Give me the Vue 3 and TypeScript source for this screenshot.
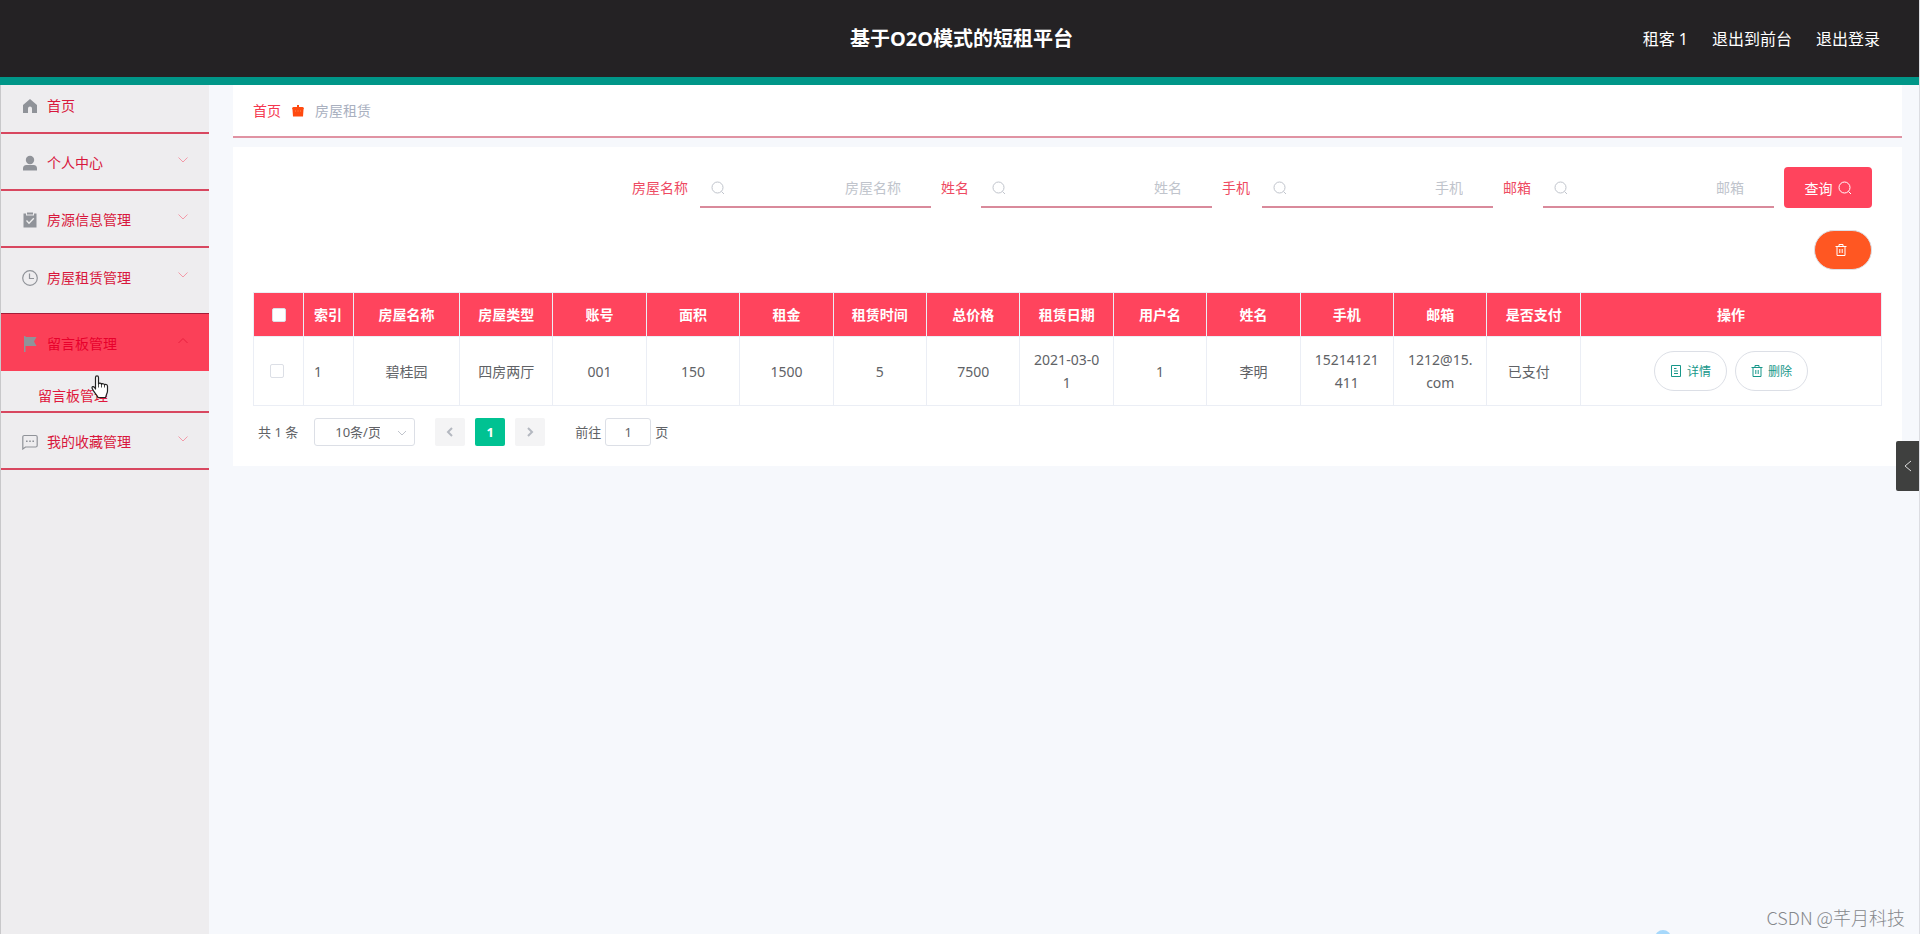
<script setup lang="ts">
import { ref } from 'vue'

interface MenuItem {
  label: string
  icon: string
  arrow: boolean
  active?: boolean
  children?: string[]
}

const menu: MenuItem[] = [
  { label: '首页', icon: 'home', arrow: false },
  { label: '个人中心', icon: 'user', arrow: true },
  { label: '房源信息管理', icon: 'claim', arrow: true },
  { label: '房屋租赁管理', icon: 'time', arrow: true },
  { label: '留言板管理', icon: 'flag', arrow: true, active: true, children: ['留言板管理'] },
  { label: '我的收藏管理', icon: 'chat', arrow: true },
]

const fields = ref([
  { id: 'house', label: '房屋名称', value: '' },
  { id: 'name', label: '姓名', value: '' },
  { id: 'phone', label: '手机', value: '' },
  { id: 'mail', label: '邮箱', value: '' },
])

const columns: string[] = [
  '房屋类型', '账号', '面积', '租金', '租赁时间', '总价格',
  '租赁日期', '用户名', '姓名', '手机', '邮箱',
]

const rows = ref([
  {
    index: 1,
    house: '碧桂园',
    cells: ['四房两厅', '001', '150', '1500', '5', '7500', '2021-03-01', '1', '李明', '15214121411', '1212@15.com'],
    paid: '已支付',
    checked: false,
  },
])

const allChecked = ref(false)
const pageSize = ref('10条/页')
const jump = ref('1')
</script>

<template>
  <div class="app">
    <header class="top">
      <h1>基于O2O模式的短租平台</h1>
      <nav class="top-links">
        <span>租客 1</span>
        <a href="#">退出到前台</a>
        <a href="#">退出登录</a>
      </nav>
    </header>

    <div class="body">
      <aside class="side">
        <ul class="menu">
          <li v-for="item in menu" :key="item.label" :class="['item', item.icon, { active: item.active }]">
            <a href="#" class="row">
              <svg class="mi" viewBox="0 0 16 16" aria-hidden="true">
                <path v-if="item.icon === 'home'" fill="#909399" d="M8 1 1 7v8h5v-4.500a2 2 0 0 1 4 0V15h5V7z" />
                <g v-else-if="item.icon === 'user'" fill="#909399">
                  <circle cx="8" cy="5" r="4.200" />
                  <path d="M1 15.500v-2A3.500 3.500 0 0 1 4.500 10h7a3.500 3.500 0 0 1 3.500 3.500v2z" />
                </g>
                <g v-else-if="item.icon === 'claim'">
                  <path fill="#909399" d="M2 1.500h2v2h8v-2h2.500v14h-13v-14zM5 .5h6v2H5z" />
                  <path fill="none" stroke="#eee" stroke-width="1.300" d="m4.500 8.500 2.500 2.700 4.800-5" />
                </g>
                <g v-else-if="item.icon === 'time'" fill="none" stroke="#909399" stroke-width="1.200">
                  <circle cx="8" cy="8" r="7.300" />
                  <path d="M7.500 3.500v5H12" />
                </g>
                <path v-else-if="item.icon === 'flag'" fill="#909399" d="M2 0h1.500v1H14.500l-2.500 4.500 2.500 4.500h-11v6H2z" />
                <g v-else fill="none" stroke="#909399" stroke-width="1.200">
                  <path d="M.8 15V3a1.500 1.500 0 0 1 1.500-1.500h11.400A1.500 1.500 0 0 1 15.200 3v8.500a1.500 1.500 0 0 1-1.500 1.500H3.500z" />
                  <path stroke-width="1.600" d="M4 7.200h1.600M7.200 7.200h1.600M10.400 7.200H12" />
                </g>
              </svg>
              <span>{{ item.label }}</span>
              <svg v-if="item.arrow" class="arrow" viewBox="0 0 12 12" aria-hidden="true">
                <path :d="item.active ? 'm1.500 8 4.500-4.500L10.500 8' : 'm1.500 3.500 4.500 4.500 4.500-4.500'" />
              </svg>
            </a>
            <ul v-if="item.children" class="sub">
              <li v-for="c in item.children" :key="c"><a href="#">{{ c }}</a></li>
            </ul>
          </li>
        </ul>
        <svg class="cursor" viewBox="0 0 18 24" aria-hidden="true">
          <path
            fill="#fff" stroke="#222" stroke-width="1.200" stroke-linejoin="round"
            d="M4.500 2.500c0-2.200 3-2.200 3 0V9c.3-1.300 2.800-1.300 3 .4.500-1.100 2.800-.9 3 .6.700-1 3-.6 3 1.200V16c0 2.500-1.500 3.500-1.800 6.500H7C6 19.500 2.500 17 1.200 13.500c-.8-2 1.300-2.600 2.300-1l1 1.500z"
          />
          <path fill="none" stroke="#222" stroke-width=".8" d="M7.500 9v3.500M10.500 9.500v3M13.500 10v2.500" />
        </svg>
      </aside>

      <main class="main">
        <nav class="crumbs">
          <a href="#">首页</a>
          <svg viewBox="0 0 12 12" aria-hidden="true">
            <path fill="#ff4a10" d="M5 0h2v2h3.500a1.500 1.500 0 0 1 1 2.500L11 11.500H1L.5 4.500A1.500 1.500 0 0 1 1.500 2H5z" />
            <path fill="none" stroke="#ff9a60" stroke-width=".8" d="M3.500 5.500v1M6 5.500v1M8.500 5.500v1" />
          </svg>
          <span>房屋租赁</span>
        </nav>

        <section class="card">
          <form class="search" @submit.prevent>
            <div v-for="f in fields" :key="f.id" class="field">
              <label :for="f.id">{{ f.label }}</label>
              <div class="box">
                <svg class="lens" viewBox="0 0 14 14" aria-hidden="true">
                  <circle cx="6.500" cy="6.500" r="5.500" /><path d="m10.500 10.500 2.500 2.500" />
                </svg>
                <input :id="f.id" v-model="f.value" type="text" :placeholder="f.label" />
              </div>
            </div>
            <button type="submit" class="query">
              查询
              <svg class="lens" viewBox="0 0 14 14" aria-hidden="true">
                <circle cx="6.500" cy="6.500" r="5.500" /><path d="m10.500 10.500 2.500 2.500" />
              </svg>
            </button>
          </form>

          <div class="tools">
            <button type="button" class="bulk" aria-label="删除">
              <svg class="bin" viewBox="0 0 12 12" aria-hidden="true">
                <path d="M.5 2.500h11M4 2.500v-2h4v2M2 2.500v9h8v-9M4.800 5v4M7.200 5v4" />
              </svg>
            </button>
          </div>

          <table>
            <colgroup>
              <col class="c-small" /><col class="c-small" /><col class="c-house" />
              <col v-for="n in 12" :key="n" />
              <col class="c-ops" />
            </colgroup>
            <thead>
              <tr>
                <th><input v-model="allChecked" type="checkbox" aria-label="全选" /></th>
                <th class="idx">索引</th>
                <th>房屋名称</th>
                <th v-for="c in columns" :key="c">{{ c }}</th>
                <th>是否支付</th>
                <th>操作</th>
              </tr>
            </thead>
            <tbody>
              <tr v-for="r in rows" :key="r.index">
                <td class="pick"><input v-model="r.checked" type="checkbox" aria-label="选择" /></td>
                <td class="idx">{{ r.index }}</td>
                <td>{{ r.house }}</td>
                <td v-for="(c, i) in r.cells" :key="i">{{ c }}</td>
                <td class="paid">{{ r.paid }}</td>
                <td>
                  <div class="ops">
                    <button type="button">
                      <svg class="bin" viewBox="0 0 12 12" aria-hidden="true">
                        <path d="M1.500 .5h9v11h-9zM4 3.500h2.500M4 6h4M4 8.500h4" />
                      </svg>
                      详情
                    </button>
                    <button type="button">
                      <svg class="bin" viewBox="0 0 12 12" aria-hidden="true">
                        <path d="M.5 2.500h11M4 2.500v-2h4v2M2 2.500v9h8v-9M4.800 5v4M7.200 5v4" />
                      </svg>
                      删除
                    </button>
                  </div>
                </td>
              </tr>
            </tbody>
          </table>

          <div class="pager">
            <span>共 1 条</span>
            <div class="size">
              <select v-model="pageSize" aria-label="每页条数"><option>10条/页</option></select>
              <svg viewBox="0 0 12 12" aria-hidden="true"><path d="m2 4 4 4 4-4" /></svg>
            </div>
            <div class="pages">
              <button type="button" aria-label="上一页"><svg viewBox="0 0 12 12"><path d="M8 2 4 6l4 4" /></svg></button>
              <button type="button" class="on">1</button>
              <button type="button" aria-label="下一页"><svg viewBox="0 0 12 12"><path d="m4 2 4 4-4 4" /></svg></button>
            </div>
            <label class="jump">前往<input v-model="jump" type="text" />页</label>
          </div>
        </section>
      </main>
    </div>

    <button type="button" class="handle" aria-label="展开">
      <svg viewBox="0 0 12 12" aria-hidden="true"><path d="M9 1 3 6l6 5" /></svg>
    </button>
    <span class="dot"></span>
    <span class="mark">CSDN @芊月科技</span>
  </div>
</template>

<style>
body {
  margin: 0;
}
</style>

<style scoped>
* {
  box-sizing: border-box;
}
.app {
  position: relative;
  display: flex;
  flex-direction: column;
  min-height: 100vh;
  overflow: hidden;
  background: #f6f8fc;
  border-right: 1px solid #dcdde2;
  font-family: "Noto Sans", "Noto Sans CJK SC", sans-serif;
  font-size: 14px;
  color: #606266;
}
a {
  color: inherit;
  text-decoration: none;
}
button,
input,
select {
  font: inherit;
  margin: 0;
}
.top {
  position: relative;
  display: flex;
  align-items: center;
  justify-content: center;
  height: 85px;
  background: #242224;
  border-bottom: 8px solid #009688;
  color: #fff;
}
.top h1 {
  margin: 0;
  padding-left: 4px;
  font-size: 20px;
  line-height: 30px;
}
.top-links {
  position: absolute;
  right: 39px;
  display: flex;
  gap: 24px;
  font-size: 16px;
  line-height: 24px;
}
.body {
  display: flex;
  flex: 1;
}
.side {
  position: relative;
  flex: 0 0 209px;
  background: #eeedef;
  border-left: 1px solid #c8c8ca;
}
.menu,
.sub {
  margin: 0;
  padding: 0;
  list-style: none;
}
.row {
  display: flex;
  align-items: center;
  height: 57px;
  padding: 0 20px 0 21px;
  border-bottom: 2px solid #d8475f;
  color: #d8173c;
}
.home .row {
  height: 49px;
  padding-bottom: 8px;
}
.time .row {
  height: 65px;
  padding-bottom: 8px;
  border-bottom: 0;
}
.mi {
  width: 16px;
  height: 16px;
  margin-top: 2px;
  margin-right: 9px;
}
.arrow {
  width: 12px;
  height: 12px;
  margin-left: auto;
  margin-bottom: 4px;
  fill: none;
  stroke: #f39aa8;
}
.active .row {
  height: 58px;
  background: #fb4058;
  border-top: 1px solid #a51c38;
  border-bottom: 0;
  color: #e8002c;
}
.active .arrow {
  stroke: #e8203f;
}
.sub a {
  display: block;
  height: 42px;
  padding: 6px 0 0 37px;
  border-bottom: 2px solid #d8475f;
  line-height: 38px;
  color: #e0183c;
}
.cursor {
  position: absolute;
  left: 90px;
  top: 290px;
  width: 18px;
  height: 24px;
}
.main {
  flex: 1;
  min-width: 0;
  padding: 0 17px 0 24px;
}
.crumbs {
  display: flex;
  align-items: center;
  gap: 11px;
  height: 53px;
  padding: 0 20px;
  background: #fff;
  border-bottom: 2px solid #e093a3;
  line-height: 20px;
  color: #a9b0bf;
}
.crumbs a {
  color: #f5364f;
}
.crumbs svg {
  width: 12px;
  height: 12px;
}
.card {
  margin-top: 9px;
  padding: 20px;
  background: #fff;
}
.search {
  display: flex;
  justify-content: flex-end;
  gap: 10px;
  padding-right: 10px;
}
.field {
  display: flex;
  align-items: center;
  gap: 12px;
}
.field label {
  padding-bottom: 1px;
  color: #ee4a62;
}
.box {
  position: relative;
}
.box input {
  display: block;
  width: 231px;
  height: 41px;
  padding: 1px 30px 0;
  border: 0;
  border-bottom: 2px solid #d98a9b;
  background: transparent;
  text-align: right;
  color: #606266;
}
.box input::placeholder {
  color: #c0c4cc;
}
.lens {
  width: 14px;
  height: 14px;
  fill: none;
  stroke: currentColor;
}
.box .lens {
  position: absolute;
  left: 11px;
  top: 14px;
  color: #c0c4cc;
}
.query {
  display: flex;
  align-items: center;
  justify-content: center;
  gap: 5px;
  width: 88px;
  height: 41px;
  padding: 0;
  border: 0;
  border-radius: 4px;
  background: #ff445d;
  color: #fff;
}
.tools {
  display: flex;
  justify-content: flex-end;
  padding: 22px 10px;
}
.bulk {
  display: flex;
  align-items: center;
  width: 58px;
  height: 40px;
  padding: 0 20px;
  border: 1px solid #dcdfe6;
  border-radius: 20px;
  background: #ff5722;
  color: #fff;
}
.bin {
  width: 12px;
  height: 12px;
  fill: none;
  stroke: currentColor;
}
table {
  width: 100%;
  table-layout: fixed;
  border-collapse: collapse;
}
.c-small {
  width: 50px;
}
.c-house {
  width: 106px;
}
.c-ops {
  width: 301px;
}
th,
td {
  padding: 11px 12px;
  border: 1px solid #ebeef5;
  line-height: 23px;
  text-align: center;
  word-break: break-all;
}
th {
  padding: 10px 0;
  background: #ff445d;
  color: #fff;
}
.idx,
th.idx {
  padding-left: 10px;
  text-align: left;
}
td.pick {
  padding: 0 14px 0 10px;
}
td.paid {
  padding-right: 22px;
}
input[type='checkbox'] {
  display: block;
  appearance: none;
  width: 14px;
  height: 14px;
  margin: 0 auto;
  border: 1px solid #dcdfe6;
  border-radius: 2px;
  background: #fff;
}
.ops {
  display: flex;
  justify-content: center;
  gap: 8px;
}
.ops button {
  display: flex;
  align-items: center;
  justify-content: center;
  gap: 5px;
  width: 73px;
  height: 40px;
  padding: 0;
  border: 1px solid #dcdfe6;
  border-radius: 20px;
  background: #fff;
  color: #17978a;
  font-size: 12px;
}
.pager {
  display: flex;
  align-items: center;
  padding: 12px 5px 0;
  font-size: 13px;
  line-height: 28px;
}
.size {
  position: relative;
  margin-left: 16px;
}
.size select {
  display: block;
  appearance: none;
  width: 101px;
  height: 28px;
  padding: 0 34px 0 20px;
  border: 1px solid #dcdfe6;
  border-radius: 3px;
  background: #fff;
  color: #606266;
  line-height: 26px;
}
.size svg {
  position: absolute;
  right: 7px;
  top: 9px;
}
.pager svg {
  width: 12px;
  height: 12px;
  fill: none;
  stroke: #c0c4cc;
}
.pages {
  display: flex;
  gap: 10px;
  margin: 0 30px 0 20px;
}
.pages button {
  display: flex;
  align-items: center;
  justify-content: center;
  width: 30px;
  height: 28px;
  padding: 0;
  border: 0;
  border-radius: 2px;
  background: #f4f4f5;
}
.pages button svg {
  stroke: #b4b8c0;
  stroke-width: 2;
}
.pages .on {
  background: #00c292;
  color: #fff;
  font-weight: 700;
}
.jump {
  display: flex;
  gap: 4px;
}
.jump input {
  width: 46px;
  height: 28px;
  padding: 0;
  border: 1px solid #dcdfe6;
  border-radius: 3px;
  text-align: center;
  color: #606266;
}
.handle {
  position: absolute;
  right: 0;
  top: 441px;
  display: flex;
  align-items: center;
  justify-content: center;
  width: 23px;
  height: 50px;
  padding: 0;
  border: 0;
  border-radius: 2px 0 0 2px;
  background: #3f403f;
}
.handle svg {
  width: 12px;
  height: 12px;
  fill: none;
  stroke: #ddd;
}
.dot {
  position: absolute;
  right: 248px;
  bottom: -12px;
  width: 16px;
  height: 16px;
  border-radius: 50%;
  background: #a6d8fb;
}
.mark {
  position: absolute;
  right: 14px;
  bottom: 4px;
  font-family: "Noto Sans CJK SC", sans-serif;
  font-size: 18px;
  font-weight: 300;
  line-height: 26px;
  color: #85878b;
}
</style>
